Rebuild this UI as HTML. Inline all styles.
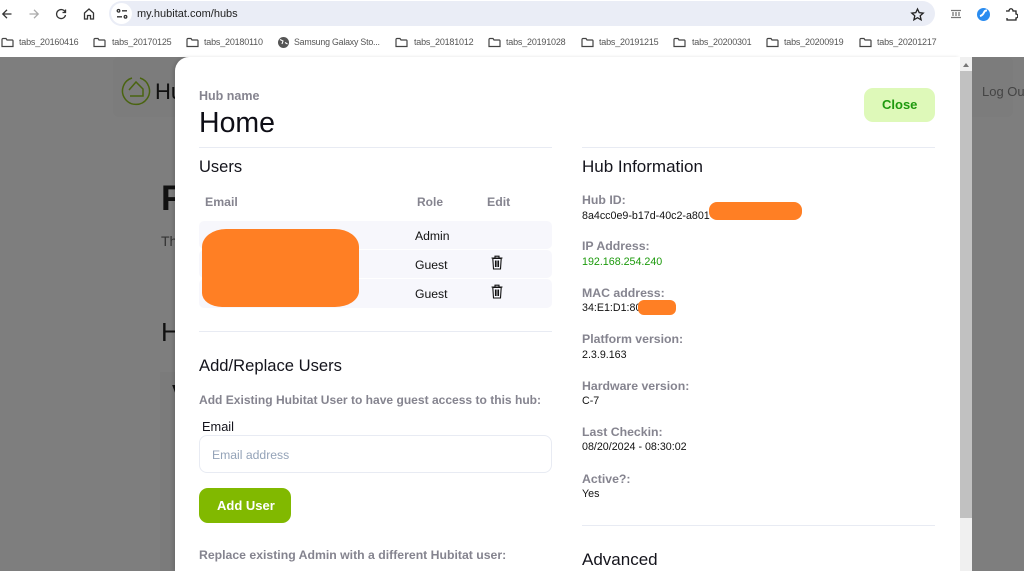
<!DOCTYPE html>
<html><head><meta charset="utf-8"><style>
html,body{margin:0;padding:0;width:1024px;height:571px;overflow:hidden;background:#fff;font-family:"Liberation Sans",sans-serif}
.t{position:absolute;white-space:nowrap;line-height:1}
.bm{font-size:9px;letter-spacing:-.2px;color:#555;top:38px}
.lab{font-size:12.300px;font-weight:bold;color:#85848f}
.val{font-size:10.700px;color:#111}
.h{font-size:17px;color:#14141c}
.a{position:absolute}
svg.a{fill:none;stroke:#444;stroke-width:1.3}
.or{position:absolute;background:#ff7f24}
.hr{position:absolute;height:1px;background:#e8ebf3}
</style></head><body>
<!-- browser chrome -->
<div class="a" style="left:109px;top:1px;width:826px;height:25px;background:#eaedf6;border-radius:13px"></div>
<div class="a" style="left:111px;top:3px;width:21px;height:21px;background:#fff;border-radius:50%"></div>
<svg class="a" style="left:0;top:7px" width="14" height="14" viewBox="0 0 14 14"><path d="M11.500 7H3M7 2.800L2.800 7 7 11.200" stroke="#333"/></svg>
<svg class="a" style="left:27px;top:7px" width="14" height="14" viewBox="0 0 14 14"><path d="M2.500 7H11M7 2.800L11.200 7 7 11.200" stroke="#aaa"/></svg>
<svg class="a" style="left:54px;top:7px" width="14" height="14" viewBox="0 0 14 14"><path d="M11.200 5.200A4.500 4.500 0 1 0 11.500 8M11.500 2.500V5.500H8.500" stroke="#333"/></svg>
<svg class="a" style="left:82px;top:7px" width="14" height="14" viewBox="0 0 14 14"><path d="M2.500 6L7 2l4.500 4V12H8.500V8.500H5.500V12H2.500Z" stroke="#333"/></svg>
<svg class="a" style="left:115px;top:7px" width="14" height="14" viewBox="0 0 14 14"><circle cx="3.500" cy="3.800" r="1.300" stroke="#333"/><path d="M7 3.800h5M2 9.800h5" stroke="#333"/><circle cx="10.500" cy="9.800" r="1.300" stroke="#333"/></svg>
<div class="t" style="left:137px;top:9px;font-size:11px;color:#222">my.hubitat.com/hubs</div>
<svg class="a" style="left:910px;top:7px" width="15" height="15" viewBox="0 0 15 15"><path d="M7.500 2l1.700 3.700 4 .4-3 2.700.9 4-3.600-2.100-3.600 2.100.9-4-3-2.700 4-.4Z" stroke="#222"/></svg>
<svg class="a" style="left:950px;top:9px" width="12" height="10" viewBox="0 0 12 10"><path d="M1 1.500h10M1 8.500h10M3 3v4M6 3v4M9 3v4" stroke="#777"/></svg>
<div class="a" style="left:977px;top:8px;width:13px;height:13px;border-radius:50%;background:#2a8cf0"></div>
<svg class="a" style="left:977px;top:8px" width="13" height="13" viewBox="0 0 13 13"><path d="M10 2.500C6 2 8 7 3 8" stroke="#fff" stroke-width="2"/></svg>
<svg class="a" style="left:1004px;top:7px" width="14" height="14" viewBox="0 0 14 14"><path d="M2 4H5C5 1 9 1 9 4H12V7C14.500 7 14.500 11 12 11V13H3V11" stroke="#222"/></svg>

<svg width="0" height="0" style="position:absolute"><defs><symbol id="f" viewBox="0 0 13 11"><path d="M1 2.500A1 1 0 0 1 2 1.500H5L6 3H11.500A.8.8 0 0 1 12 3.800V9.500H1Z" fill="none" stroke="#444" stroke-width="1.200"/></symbol></defs></svg>
<svg style="position:absolute;left:1px;top:37px" width="13" height="11"><use href="#f"/></svg><div class="t bm" style="left:19px">tabs_20160416</div>
<svg style="position:absolute;left:93px;top:37px" width="13" height="11"><use href="#f"/></svg><div class="t bm" style="left:112px">tabs_20170125</div>
<svg style="position:absolute;left:186px;top:37px" width="13" height="11"><use href="#f"/></svg><div class="t bm" style="left:204px">tabs_20180110</div>
<div class="a" style="left:278px;top:37px;width:11px;height:11px;border-radius:50%;background:#555"></div>
<svg class="a" style="left:278px;top:37px" width="11" height="11" viewBox="0 0 11 11"><path d="M2 2.500L5 4 4 7M7 5.500L9.500 7" stroke="#fff" stroke-width="1.100"/></svg>
<div class="t bm" style="left:294px;font-size:8.800px">Samsung Galaxy Sto...</div>
<svg style="position:absolute;left:395px;top:37px" width="13" height="11"><use href="#f"/></svg><div class="t bm" style="left:414px">tabs_20181012</div>
<svg style="position:absolute;left:488px;top:37px" width="13" height="11"><use href="#f"/></svg><div class="t bm" style="left:506px">tabs_20191028</div>
<svg style="position:absolute;left:581px;top:37px" width="13" height="11"><use href="#f"/></svg><div class="t bm" style="left:599px">tabs_20191215</div>
<svg style="position:absolute;left:673px;top:37px" width="13" height="11"><use href="#f"/></svg><div class="t bm" style="left:692px">tabs_20200301</div>
<svg style="position:absolute;left:766px;top:37px" width="13" height="11"><use href="#f"/></svg><div class="t bm" style="left:784px">tabs_20200919</div>
<svg style="position:absolute;left:859px;top:37px" width="13" height="11"><use href="#f"/></svg><div class="t bm" style="left:877px">tabs_20201217</div>

<!-- dimmed page -->
<div class="a" style="left:0;top:57px;width:1024px;height:514px;background:#7e7e7e;overflow:hidden">
<div class="a" style="left:113px;top:0;width:900px;height:60px;background:#7c7c7c;border-radius:6px"></div>
<div class="a" style="left:160px;top:315px;width:800px;height:200px;background:#7b7b7b"></div>
<svg class="a" style="left:120px;top:18px" width="32" height="32" viewBox="0 0 32 32"><path d="M12 3A13.500 13.500 0 1 0 20 3" stroke="#4a6410" stroke-width="1.500"/><path d="M9 15L16 7l7 7V21H10" stroke="#4a6410" stroke-width="1.500"/></svg>
<div class="t" style="left:155px;top:24px;font-size:22px;color:#111">Hu</div>
<div class="t" style="left:161px;top:124px;font-size:35px;font-weight:bold;color:#111">F</div>
<div class="t" style="left:161px;top:177px;font-size:14px;color:#333">Th</div>
<div class="t" style="left:161px;top:262px;font-size:26px;color:#111">H</div>
<div class="t" style="left:172px;top:324px;font-size:26px;font-weight:bold;color:#111">V</div>
<div class="t" style="left:982px;top:28px;font-size:13px;color:#444">Log Out</div>
</div>

<!-- modal -->
<div class="a" style="left:175px;top:57px;width:785px;height:514px;background:#fff;border-radius:14px 0 0 0;box-shadow:-2px 0 3px rgba(0,0,0,.12)"></div>
<!-- scrollbar -->
<div class="a" style="left:960px;top:57px;width:12px;height:514px;background:#f0f0f0"></div>
<div class="a" style="left:960px;top:71px;width:12px;height:447px;background:#c1c1c1"></div>
<div class="a" style="left:963px;top:63px;width:0;height:0;border-left:3px solid transparent;border-right:3px solid transparent;border-bottom:4px solid #777"></div>

<div class="t lab" style="left:199px;top:89.500px;font-size:12.500px">Hub name</div>
<div class="t" style="left:199px;top:109px;font-size:28.500px;color:#0e0e16">Home</div>
<div class="a" style="left:864px;top:88px;width:71px;height:34px;background:#def9b9;border-radius:9px"></div>
<div class="t" style="left:882px;top:98px;font-size:13px;font-weight:bold;color:#1f9a0e">Close</div>
<div class="hr" style="left:199px;top:147px;width:353px"></div>
<div class="hr" style="left:582px;top:147px;width:353px"></div>

<div class="t h" style="left:199px;top:159px;font-size:16.500px">Users</div>
<div class="t lab" style="left:205px;top:195.500px">Email</div>
<div class="t lab" style="left:417px;top:195.500px;font-size:12px">Role</div>
<div class="t lab" style="left:487px;top:195.500px">Edit</div>
<div class="a" style="left:199px;top:221px;width:353px;height:28px;background:#f7f7fc;border-radius:5px"></div>
<div class="a" style="left:199px;top:250px;width:353px;height:28px;background:#f7f7fc;border-radius:5px"></div>
<div class="a" style="left:199px;top:279px;width:353px;height:29px;background:#f7f7fc;border-radius:5px"></div>
<div class="or" style="left:202px;top:229px;width:157px;height:78px;border-radius:24px 24px 24px 20px/18px 18px 16px 14px"></div>
<div class="t" style="left:415px;top:230px;font-size:12.200px;color:#111">Admin</div>
<div class="t" style="left:415px;top:259px;font-size:12.200px;color:#111">Guest</div>
<div class="t" style="left:415px;top:288px;font-size:12.200px;color:#111">Guest</div>
<svg class="a" style="left:490px;top:255px" width="14" height="15" viewBox="0 0 14 15"><path d="M1.500 3H12.500M5 3V1.200H9V3M2.800 3.500L3.500 14H10.500L11.200 3.500Z M5.500 5.500V12M7 5.500V12M8.500 5.500V12" stroke="#111" stroke-width="1.100"/></svg>
<svg class="a" style="left:490px;top:284px" width="14" height="15" viewBox="0 0 14 15"><path d="M1.500 3H12.500M5 3V1.200H9V3M2.800 3.500L3.500 14H10.500L11.200 3.500Z M5.500 5.500V12M7 5.500V12M8.500 5.500V12" stroke="#111" stroke-width="1.100"/></svg>
<div class="hr" style="left:199px;top:331px;width:353px"></div>

<div class="t h" style="left:199px;top:357.500px;font-size:16.600px">Add/Replace Users</div>
<div class="t lab" style="left:199px;top:393.500px;font-size:12.050px">Add Existing Hubitat User to have guest access to this hub:</div>
<div class="t" style="left:202px;top:421px;font-size:12.800px;color:#14141c">Email</div>
<div class="a" style="left:199px;top:435px;width:351px;height:36px;border:1px solid #e8ebf3;border-radius:8px;background:#fff"></div>
<div class="t" style="left:212px;top:449px;font-size:12.200px;color:#94a3b8">Email address</div>
<div class="a" style="left:199px;top:488px;width:92px;height:35px;background:#81b900;border-radius:9px"></div>
<div class="t" style="left:217px;top:499px;font-size:13px;font-weight:bold;color:#fff">Add User</div>
<div class="t lab" style="left:199px;top:549px;font-size:12.250px">Replace existing Admin with a different Hubitat user:</div>

<div class="t h" style="left:582px;top:158px">Hub Information</div>
<div class="t lab" style="left:582px;top:194px">Hub ID:</div>
<div class="t val" style="left:582px;top:210.500px">8a4cc0e9-b17d-40c2-a801-</div>
<div class="or" style="left:709px;top:202px;width:93px;height:18px;border-radius:8px"></div>
<div class="t lab" style="left:582px;top:240px">IP Address:</div>
<div class="t val" style="left:582px;top:256.500px;color:#1c9a0c">192.168.254.240</div>
<div class="t lab" style="left:582px;top:287px">MAC address:</div>
<div class="t val" style="left:582px;top:302.500px">34:E1:D1:80</div>
<div class="or" style="left:638px;top:300px;width:38px;height:15px;border-radius:6px"></div>
<div class="t lab" style="left:582px;top:333px">Platform version:</div>
<div class="t val" style="left:582px;top:349.500px">2.3.9.163</div>
<div class="t lab" style="left:582px;top:380px">Hardware version:</div>
<div class="t val" style="left:582px;top:395.500px">C-7</div>
<div class="t lab" style="left:582px;top:426px">Last Checkin:</div>
<div class="t val" style="left:582px;top:442px">08/20/2024 - 08:30:02</div>
<div class="t lab" style="left:582px;top:473px">Active?:</div>
<div class="t val" style="left:582px;top:488.500px">Yes</div>
<div class="hr" style="left:582px;top:525px;width:353px"></div>
<div class="t h" style="left:582px;top:551px">Advanced</div>
</body></html>
